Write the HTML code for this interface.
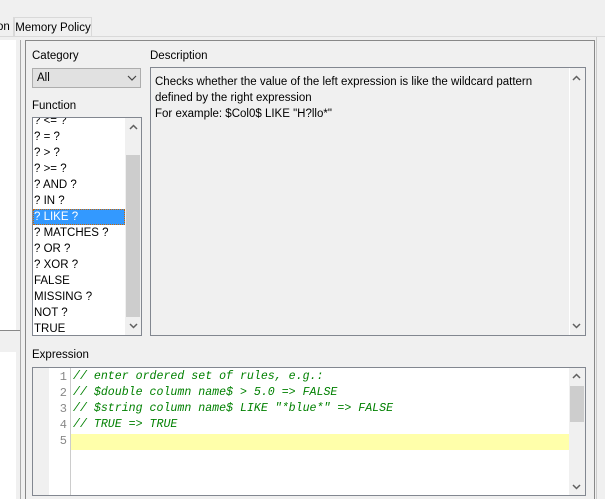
<html style="overflow:hidden;height:499px"><head><style>
body{margin:0;width:605px;height:499px;background:#f0f0f0;font-family:"Liberation Sans",sans-serif;font-size:12px;color:#000;position:relative;overflow:hidden}
.a{position:absolute}
.lbl{position:absolute;font-size:11.5px}
.item{height:16px;line-height:16px;padding-left:1px;font-size:11.5px}
.code{font-family:"Liberation Mono",monospace;font-size:11.6px;font-style:italic;color:#008000;height:16px;line-height:16px;white-space:pre}
.ln{height:16px;line-height:16px;text-align:right;color:#888;font-family:"Liberation Mono",monospace;font-size:12px}
</style></head><body>
<div class="a" style="left:0;top:17px;width:13px;height:19px;border-right:1px solid #d9d9d9;line-height:21px;font-size:11.5px;overflow:hidden;text-indent:-3px">on</div>
<div class="a" style="left:14px;top:17px;width:76px;height:19px;background:#f0f0f0;border:1px solid #d9d9d9;border-bottom:none;line-height:21px;font-size:11.5px;text-align:center">Memory Policy</div>
<div class="a" style="left:0;top:36px;width:606px;height:1px;background:#d9d9d9"></div>
<div class="a" style="left:0;top:40px;width:16px;height:290px;background:#fff"></div>
<div class="a" style="left:0;top:330px;width:21px;height:1px;background:#888"></div>
<div class="a" style="left:0;top:352px;width:16px;height:147px;background:#fff"></div>
<div class="a" style="left:20px;top:40px;width:1px;height:459px;background:#aaa"></div>
<div class="a" style="left:25px;top:40px;width:568px;height:470px;border:1px solid #888;border-bottom:none"></div>
<div class="a" style="left:596px;top:37px;width:1px;height:462px;background:#ccc"></div>
<div class="lbl" style="left:32px;top:50px">Category</div>
<div class="lbl" style="left:150px;top:50px">Description</div>
<div class="a" style="left:32px;top:68px;width:107px;height:18px;background:#e1e1e1;border:1px solid #adadad"><span style="position:absolute;left:4px;top:3px;font-size:11.5px">All</span>
<svg class="a" style="left:94px;top:6px" width="10" height="6"><path d="M1 1L5 5L9 1" fill="none" stroke="#444" stroke-width="1.2"/></svg></div>
<div class="lbl" style="left:32px;top:100px">Function</div>
<div class="a" style="left:32px;top:117px;width:108px;height:217px;border:1px solid #828790;background:#fff;overflow:hidden">
<div style="position:absolute;top:-5px;left:0;width:92px">
<div class="item">? &lt;= ?</div><div class="item">? = ?</div><div class="item">? &gt; ?</div><div class="item">? &gt;= ?</div><div class="item">? AND ?</div><div class="item">? IN ?</div>
<div class="item" style="background:#3399ff;color:#fff;outline:1px dotted #c60;outline-offset:-1px">? LIKE ?</div>
<div class="item">? MATCHES ?</div><div class="item">? OR ?</div><div class="item">? XOR ?</div><div class="item">FALSE</div><div class="item">MISSING ?</div><div class="item">NOT ?</div><div class="item">TRUE</div></div>
<div class="a" style="left:92px;top:0;width:16px;height:217px;background:#f0f0f0"></div>
<div class="a" style="left:93px;top:37px;width:14px;height:162px;background:#cdcdcd"></div>
<svg class="a" style="left:96px;top:6px" width="9" height="6"><path d="M1 5L4.5 1.5L8 5" fill="none" stroke="#606060" stroke-width="1.5"/></svg>
<svg class="a" style="left:96px;top:205px" width="9" height="6"><path d="M1 1L4.5 4.5L8 1" fill="none" stroke="#606060" stroke-width="1.5"/></svg>
</div>
<div class="a" style="left:150px;top:67px;width:434px;height:267px;border:1px solid #828790;background:#f0f0f0">
<div style="position:absolute;left:4px;top:6px;font-size:11.5px;line-height:16px;width:410px">Checks whether the value of the left expression is like the wildcard pattern defined by the right expression<br>For example: $Col0$ LIKE "H?llo*"</div>
<div class="a" style="left:418px;top:0;width:1px;height:267px;background:#fff"></div>
<svg class="a" style="left:421px;top:7px" width="9" height="6"><path d="M1 5L4.5 1.5L8 5" fill="none" stroke="#606060" stroke-width="1.5"/></svg>
<svg class="a" style="left:421px;top:255px" width="9" height="6"><path d="M1 1L4.5 4.5L8 1" fill="none" stroke="#606060" stroke-width="1.5"/></svg>
</div>
<div class="lbl" style="left:32px;top:349px">Expression</div>
<div class="a" style="left:32px;top:367px;width:552px;height:127px;border:1px solid #828790;background:#fff;overflow:hidden">
<div class="a" style="left:0;top:0;width:16px;height:140px;background:#f0f0f0"></div>
<div class="a" style="left:37px;top:0;width:1px;height:140px;background:#ccc"></div>
<div class="a" style="left:38px;top:66px;width:498px;height:16px;background:#ffffaa"></div>
<div class="a" style="left:16px;top:1px;width:18px"><div class="ln">1</div><div class="ln">2</div><div class="ln">3</div><div class="ln">4</div><div class="ln">5</div></div>
<div class="a" style="left:40px;top:1px"><div class="code">// enter ordered set of rules, e.g.:</div><div class="code">// $double column name$ &gt; 5.0 =&gt; FALSE</div><div class="code">// $string column name$ LIKE "*blue*" =&gt; FALSE</div><div class="code">// TRUE =&gt; TRUE</div></div>
<div class="a" style="left:536px;top:0;width:16px;height:140px;background:#f0f0f0"></div>
<div class="a" style="left:537px;top:18px;width:14px;height:36px;background:#cdcdcd"></div>
<svg class="a" style="left:539px;top:5px" width="9" height="6"><path d="M1 5L4.5 1.5L8 5" fill="none" stroke="#606060" stroke-width="1.5"/></svg>
<svg class="a" style="left:539px;top:116px" width="9" height="6"><path d="M1 1L4.5 4.5L8 1" fill="none" stroke="#606060" stroke-width="1.5"/></svg>
</div>
</body></html>
